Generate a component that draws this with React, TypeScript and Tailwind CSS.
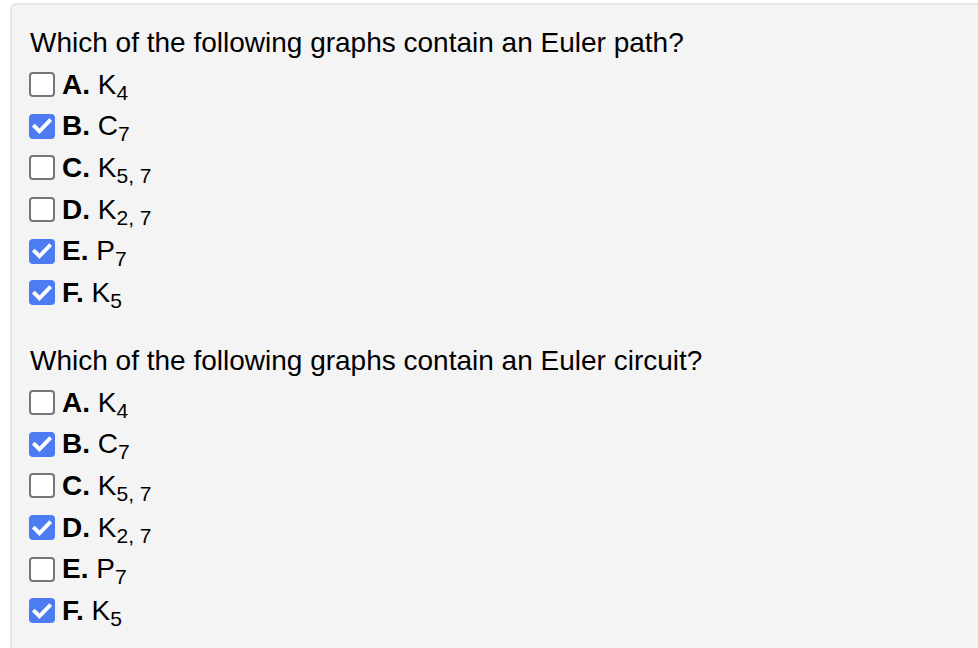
const questions = [
  {
    title: 'Which of the following graphs contain an Euler path?',
    options: [
      { letter: 'A.', base: 'K', sub: '4', checked: false },
      { letter: 'B.', base: 'C', sub: '7', checked: true },
      { letter: 'C.', base: 'K', sub: '5, 7', checked: false },
      { letter: 'D.', base: 'K', sub: '2, 7', checked: false },
      { letter: 'E.', base: 'P', sub: '7', checked: true },
      { letter: 'F.', base: 'K', sub: '5', checked: true },
    ],
  },
  {
    title: 'Which of the following graphs contain an Euler circuit?',
    options: [
      { letter: 'A.', base: 'K', sub: '4', checked: false },
      { letter: 'B.', base: 'C', sub: '7', checked: true },
      { letter: 'C.', base: 'K', sub: '5, 7', checked: false },
      { letter: 'D.', base: 'K', sub: '2, 7', checked: true },
      { letter: 'E.', base: 'P', sub: '7', checked: false },
      { letter: 'F.', base: 'K', sub: '5', checked: true },
    ],
  },
];

function Checkbox({ checked }: { checked: boolean }) {
  if (checked) {
    return (
      <div className="w-[26px] h-[25px] rounded-[4px] bg-[#4d7cf2] flex items-center justify-center shrink-0">
        <svg width="22" height="22" viewBox="0 0 24 24" fill="none">
          <path d="M4 12.5l5.2 5.2L20 6.5" stroke="white" strokeWidth="4.2" strokeLinecap="square" />
        </svg>
      </div>
    );
  }
  return <div className="w-[26px] h-[25px] rounded-[4px] border-2 border-[#767676] bg-white shrink-0" />;
}

export default function App() {
  return (
    <div className="w-[978px] h-[648px] overflow-hidden bg-white pl-[10px] pt-[3px] font-['Liberation_Sans',Arial,sans-serif] text-black">
      <div className="h-[700px] bg-[#f4f4f4] border-2 border-r-0 border-[#e6e6e6] rounded-tl-md pl-[17px] pt-[17px]">
        {questions.map((q, qi) => (
          <div key={qi} className={qi > 0 ? 'mt-[26.4px]' : ''}>
            <div className="text-[28px] leading-[42px] pl-px">{q.title}</div>
            {q.options.map((opt) => (
              <div key={opt.letter} className="h-[41.6px] flex items-center">
                <Checkbox checked={opt.checked} />
                <span className="ml-[7px] text-[28px] leading-none whitespace-pre">
                  <span className="font-bold">{opt.letter}</span> {opt.base}
                  <sub className="text-[21px] relative top-[6px]">{opt.sub}</sub>
                </span>
              </div>
            ))}
          </div>
        ))}
      </div>
    </div>
  );
}
